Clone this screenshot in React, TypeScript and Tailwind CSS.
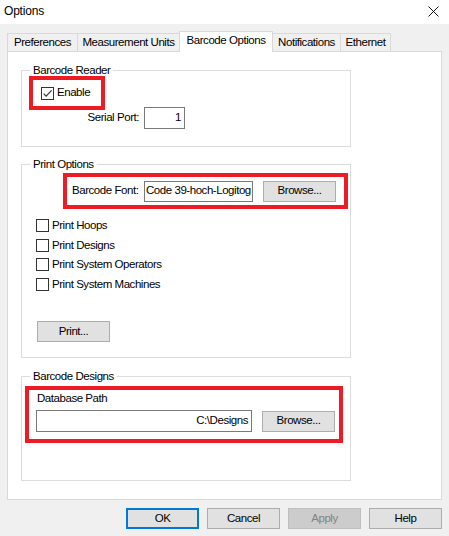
import React from 'react';

const RED = 'border-[4px] border-[#ed1c24]';

function CheckBox({ checked = false }: { checked?: boolean }) {
    return (
        <span className="w-[13px] h-[13px] border border-[#333333] bg-white flex items-center justify-center shrink-0">
            {checked && (
                <svg width="11" height="11" viewBox="0 0 11 11">
                    <path d="M1.6 5.6 L4.1 8.1 L9.6 2.4" fill="none" stroke="#333333" strokeWidth="1.2" />
                </svg>
            )}
        </span>
    );
}

function Button({ label, disabled = false, focused = false, className = '' }: { label: string; disabled?: boolean; focused?: boolean; className?: string }) {
    const look = disabled
        ? 'bg-[#cccccc] border border-[#bfbfbf] text-[#838383]'
        : focused
            ? 'bg-[#e1e1e1] border-2 border-[#0078d7]'
            : 'bg-[#e1e1e1] border border-[#adadad]';
    return (
        <div className={`h-[21px] w-[73px] flex items-center justify-center shrink-0 ${look} ${className}`}>
            {label}
        </div>
    );
}

function TextBox({ value, className = '', right = false }: { value: string; className?: string; right?: boolean }) {
    return (
        <div className={`h-[21px] border border-[#7a7a7a] bg-white flex items-center overflow-hidden whitespace-nowrap shrink-0 ${right ? 'justify-end pr-[3px]' : 'pl-[1px]'} ${className}`}>
            {value}
        </div>
    );
}

function Group({ title, children, className = '' }: { title: string; children: React.ReactNode; className?: string }) {
    return (
        <fieldset className={`w-[330px] border border-[#dcdcdc] ${className}`}>
            <legend className="ml-[8px] px-[3px] leading-[14px]">{title}</legend>
            {children}
        </fieldset>
    );
}

const tabs = [
    { name: 'Preferences', w: 'w-[71px]' },
    { name: 'Measurement Units', w: 'w-[103px]' },
    { name: 'Barcode Options', w: 'w-[94px]', active: true },
    { name: 'Notifications', w: 'w-[69px]' },
    { name: 'Ethernet', w: 'w-[51px]' },
];

const printChecks = ['Print Hoops', 'Print Designs', 'Print System Operators', 'Print System Machines'];

export default function App() {
    return (
        <div className="w-[449px] h-[536px] bg-[#f0f0f0] flex flex-col font-['Liberation_Sans',Arial,sans-serif] text-[11.5px] tracking-[-0.45px] text-black overflow-hidden">
            {/* Title bar */}
            <div className="h-[24px] bg-white flex items-center justify-between pl-[4px] pr-[10px] shrink-0">
                <span className="text-[12px] tracking-[-0.2px] -mt-[2px]">Options</span>
                <svg width="11" height="11" viewBox="0 0 11 11" className="-mt-[2px]">
                    <path d="M0.5 0.5 L10.5 10.5 M10.5 0.5 L0.5 10.5" stroke="#111111" strokeWidth="1" />
                </svg>
            </div>

            {/* Tabs */}
            <div className="mt-[7px] pl-[7px] flex items-end relative z-10">
                {tabs.map((t, i) => (
                    <div
                        key={t.name}
                        className={`${t.w} ${i > 0 ? '-ml-px' : ''} border-t border-l border-r border-[#d9d9d9] flex items-center justify-center whitespace-nowrap ${
                            t.active ? 'h-[21px] bg-white pb-[3px] relative z-10' : 'h-[18px] mb-px bg-[#f0f0f0]'
                        }`}
                    >
                        {t.name}
                    </div>
                ))}
            </div>

            {/* Panel */}
            <div className="mx-[7px] -mt-px h-[449px] bg-white border border-[#d9d9d9] pt-[11px] pl-[13px] shrink-0">
                <Group title="Barcode Reader" className="pb-[17px]">
                    <div className={`${RED} ml-[7px] -mt-px w-[76px] h-[34px] flex items-center pl-[8px] gap-[3px] relative z-10`}>
                        <CheckBox checked />
                        <span>Enable</span>
                    </div>
                    <div className="w-[163px] -mt-[3px] flex items-center justify-end gap-[5px]">
                        <span>Serial Port:</span>
                        <TextBox value="1" right className="w-[41px] h-[22px]" />
                    </div>
                </Group>

                <Group title="Print Options" className="mt-[10px] pb-[15px]">
                    <div className={`${RED} ml-[41px] mt-[2px] w-[285px] h-[36px] flex items-center pl-[5px]`}>
                        <span className="w-[72px] shrink-0">Barcode Font:</span>
                        <TextBox value="Code 39-hoch-Logitog" className="w-[109px]" />
                        <Button label="Browse..." className="ml-[10px] w-[72px]" />
                    </div>
                    <div className="mt-[7px] flex flex-col">
                        {printChecks.map((c) => (
                            <div key={c} className="h-[19.5px] flex items-center pl-[14px] gap-[3px]">
                                <CheckBox />
                                <span>{c}</span>
                            </div>
                        ))}
                    </div>
                    <Button label="Print..." className="ml-[15px] mt-[27px]" />
                </Group>

                <Group title="Barcode Designs" className="mt-[11px] pb-[37px]">
                    <div className={`${RED} ml-[3px] mt-[3px] w-[318px] h-[57px] flex flex-col pl-[7px] pt-[1px]`}>
                        <span className="leading-[14px] pl-[1px]">Database Path</span>
                        <div className="mt-[5px] flex items-center">
                            <TextBox value="C:\Designs" right className="w-[216px] h-[22px]" />
                            <Button label="Browse..." className="ml-[10px]" />
                        </div>
                    </div>
                </Group>
            </div>

            {/* Dialog buttons */}
            <div className="mt-[8px] pr-[7px] flex justify-end gap-[8px]">
                <Button label="OK" focused />
                <Button label="Cancel" />
                <Button label="Apply" disabled />
                <Button label="Help" />
            </div>
        </div>
    );
}
